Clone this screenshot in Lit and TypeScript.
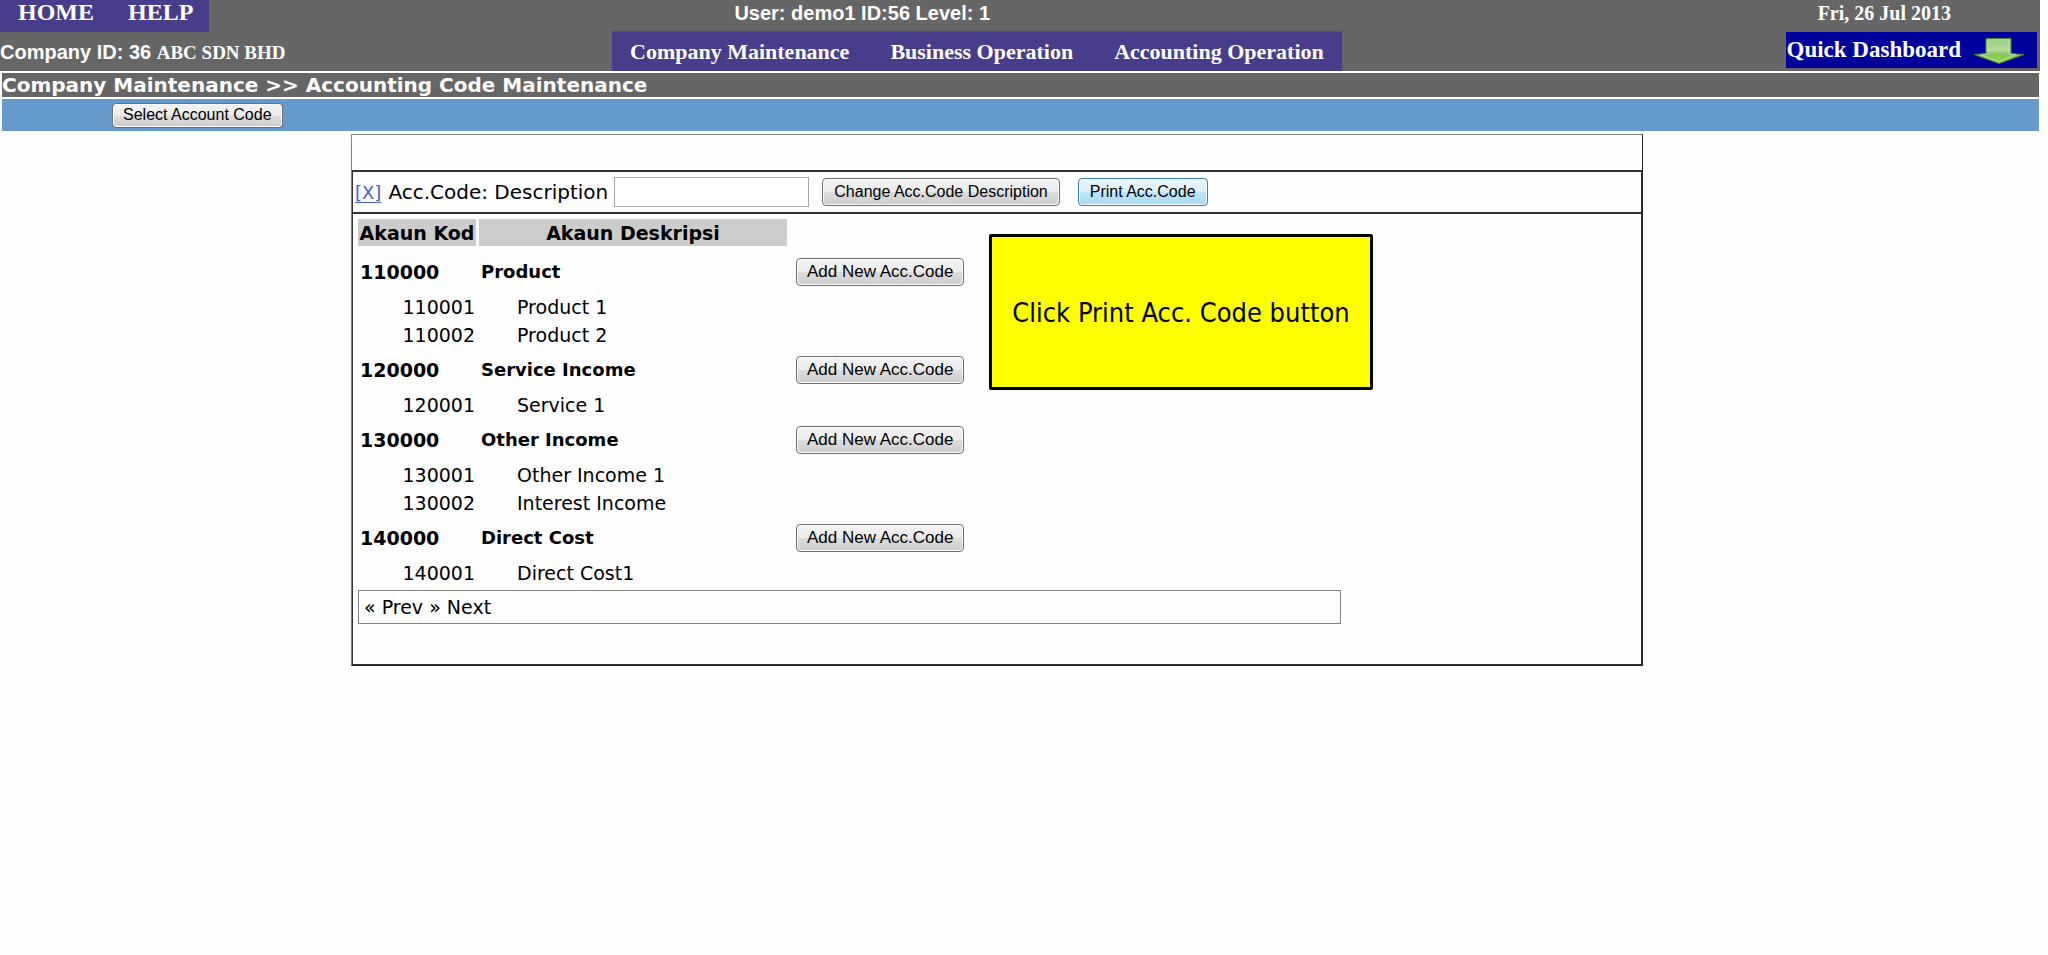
import { LitElement, html, css } from "lit";
import { customElement } from "lit/decorators.js";

interface Account {
  code: string;
  name: string;
}

interface AccountGroup extends Account {
  children: Account[];
}

const GROUPS: AccountGroup[] = [
  {
    code: "110000",
    name: "Product",
    children: [
      { code: "110001", name: "Product 1" },
      { code: "110002", name: "Product 2" },
    ],
  },
  {
    code: "120000",
    name: "Service Income",
    children: [{ code: "120001", name: "Service 1" }],
  },
  {
    code: "130000",
    name: "Other Income",
    children: [
      { code: "130001", name: "Other Income 1" },
      { code: "130002", name: "Interest Income" },
    ],
  },
  {
    code: "140000",
    name: "Direct Cost",
    children: [{ code: "140001", name: "Direct Cost1" }],
  },
];

const controls = css`
  button {
    box-sizing: border-box;
    height: 28px;
    padding: 0 9px;
    border: 1px solid #707070;
    border-radius: 4px;
    background: linear-gradient(#f3f3f3, #ebebeb 48%, #dcdcdc 52%, #cdcdcd);
    box-shadow: inset 0 0 0 1px #fafafa;
    color: #000;
    font: 16px "Liberation Sans", Arial, sans-serif;
    white-space: nowrap;
  }
`;

@customElement("site-header")
export class SiteHeader extends LitElement {
  static styles = css`
    :host {
      display: block;
      background: #666;
      color: #fff;
      font: bold 20px "Liberation Sans", Arial, sans-serif;
    }
    a {
      color: inherit;
      text-decoration: none;
    }
    .row {
      display: grid;
      align-items: start;
    }
    .top {
      grid-template-columns: 36% 1fr auto;
      height: 32px;
    }
    .bottom {
      grid-template-columns: 30% 1fr auto;
      height: 39px;
    }
    .main,
    .sections {
      display: flex;
      justify-self: start;
      background: #483d8b;
      font-family: "Liberation Serif", "Times New Roman", serif;
    }
    .main {
      height: 32px;
      font-size: 24px;
      line-height: 24px;
    }
    .main a {
      padding: 0 16px 0 18px;
    }
    .user,
    .date {
      line-height: 26px;
    }
    .date {
      padding-right: 89px;
      font-family: "Liberation Serif", "Times New Roman", serif;
    }
    .company {
      line-height: 40px;
      white-space: nowrap;
    }
    .company b {
      font: bold 19px "Liberation Serif", "Times New Roman", serif;
    }
    .sections {
      height: 39px;
      font-size: 22px;
      line-height: 40px;
      gap: 41px;
      padding: 0 18px;
      box-shadow: 0 -1px 1px #544e7c;
    }
    .dashboard {
      display: flex;
      align-items: center;
      gap: 12px;
      height: 36px;
      padding: 0 12px 0 1px;
      margin-right: 3px;
      background: #00009b;
      font: bold 23px "Liberation Serif", "Times New Roman", serif;
    }
    .dashboard svg {
      display: block;
    }
  `;

  render() {
    return html`
      <div class="row top">
        <nav class="main"><a href="#home">HOME</a><a href="#help">HELP</a></nav>
        <div class="user">User: demo1 ID:56 Level: 1</div>
        <div class="date">Fri, 26 Jul 2013</div>
      </div>
      <div class="row bottom">
        <div class="company">Company ID: 36 <b>ABC SDN BHD</b></div>
        <nav class="sections">
          <a href="#company">Company Maintenance</a>
          <a href="#business">Business Operation</a>
          <a href="#accounting">Accounting Operation</a>
        </nav>
        <a class="dashboard" href="#dashboard">
          Quick Dashboard
          <svg width="52" height="28" viewBox="0 0 52 28" aria-hidden="true">
            <defs>
              <linearGradient id="arrow" x1="0" y1="0" x2="0" y2="1">
                <stop offset="0" stop-color="#9cc982" />
                <stop offset="0.45" stop-color="#b6dc9c" />
                <stop offset="0.6" stop-color="#8cc860" />
                <stop offset="1" stop-color="#8ed044" />
              </linearGradient>
            </defs>
            <path
              d="M13 2.5H38V17.5L51 18.5L26 27.5L1 18.5L13 17.5Z"
              fill="url(#arrow)"
              stroke="#3f8a3a"
              stroke-width="1"
              stroke-linejoin="round"
            />
            <path d="M15 4H36V18.5H43L26 25.5L8 19L15 18.5Z" fill="none" stroke="#d3edbd" stroke-opacity="0.5" />
          </svg>
        </a>
      </div>
    `;
  }
}

@customElement("account-table")
export class AccountTable extends LitElement {
  static styles = [
    controls,
    css`
      :host {
        display: block;
      }
      table {
        border-spacing: 3px 0;
        line-height: 24px;
      }
      th,
      td {
        padding: 0;
        text-align: left;
        white-space: nowrap;
      }
      thead th {
        height: 27px;
        background: #ccc;
        text-align: center;
      }
      .kod {
        width: 118px;
      }
      .deskripsi {
        width: 308px;
      }
      .gap td {
        height: 5px;
        line-height: 0;
      }
      .group > * {
        height: 42px;
      }
      .group th {
        padding-left: 2px;
      }
      .group .name {
        padding-left: 2px;
        font-size: 18px;
        font-weight: bold;
      }
      .group .action {
        padding-left: 6px;
      }
      .child td {
        height: 28px;
      }
      .child .code {
        padding-right: 1px;
        text-align: right;
      }
      .child .name {
        padding-left: 38px;
      }
      button {
        padding: 0 10px;
        font-size: 17px;
      }
    `,
  ];

  render() {
    return html`
      <table>
        <thead>
          <tr>
            <th class="kod" scope="col">Akaun Kod</th>
            <th class="deskripsi" scope="col">Akaun Deskripsi</th>
          </tr>
        </thead>
        <tbody>
          <tr class="gap"><td colspan="3"></td></tr>
          ${GROUPS.map(
            (group) => html`
              <tr class="group">
                <th scope="row">${group.code}</th>
                <td class="name">${group.name}</td>
                <td class="action"><button type="button">Add New Acc.Code</button></td>
              </tr>
              ${group.children.map(
                (account) => html`
                  <tr class="child">
                    <td class="code">${account.code}</td>
                    <td class="name">${account.name}</td>
                  </tr>
                `
              )}
            `
          )}
        </tbody>
      </table>
    `;
  }
}

@customElement("app-root")
export class AppRoot extends LitElement {
  static styles = [
    controls,
    css`
      :host {
        display: block;
        min-height: 100vh;
        background: #fefefe;
        color: #000;
        font: 19px "DejaVu Sans", Verdana, sans-serif;
      }
      .page {
        margin-right: 8px;
      }
      h1 {
        margin: 2px 1px 2px 2px;
        background: #666;
        color: #fff;
        font-size: 20px;
        line-height: 24px;
        white-space: nowrap;
      }
      .toolbar {
        display: flex;
        align-items: center;
        height: 32px;
        margin: 0 1px 0 2px;
        padding-left: 110px;
        background: #69c;
      }
      .toolbar button {
        height: 25px;
        padding: 0 10px;
      }
      .content {
        display: grid;
        grid-template-columns: 351fr 1292fr 397fr;
        padding-top: 3px;
      }
      .panel {
        grid-column: 2;
        position: relative;
        box-sizing: border-box;
        border: 1px solid #808080;
        border-right-color: #222;
        border-bottom-color: #222;
      }
      .blank {
        height: 35px;
      }
      .search,
      .body {
        border: solid #333;
        border-width: 2px 1px 1px;
      }
      .search {
        display: flex;
        align-items: center;
        height: 40px;
        padding-left: 2px;
        border-bottom: 0;
        font-size: 20px;
      }
      .search a {
        margin-right: 7px;
        color: #4a63c8;
        font-size: 18px;
        text-underline-offset: 3px;
      }
      .search input {
        box-sizing: border-box;
        width: 195px;
        height: 30px;
        margin: 0 13px 0 6px;
        padding: 0 4px;
        border: 1px solid #aaa;
        background: #fff;
        font: inherit;
      }
      .search button {
        margin-right: 18px;
        padding: 0 11px;
      }
      .search .active {
        border-color: #3c7fb1;
        background: linear-gradient(#eaf6fd, #d9f0fc 48%, #bee6fd 52%, #a7d9f5);
      }
      .body {
        padding: 5px 2px 40px;
      }
      .pager {
        box-sizing: border-box;
        width: 983px;
        max-width: 100%;
        margin: 3px 0 0 3px;
        padding: 0 5px;
        border: 1px solid #808080;
        line-height: 32px;
      }
      .pager a {
        color: inherit;
        text-decoration: none;
      }
      .callout {
        position: absolute;
        top: 99px;
        left: 637px;
        box-sizing: border-box;
        width: 384px;
        height: 156px;
        display: flex;
        align-items: center;
        justify-content: center;
        border: 3px solid #000;
        border-radius: 2px;
        background: #ff0;
        font: 27px "DejaVu Sans Condensed", Tahoma, sans-serif;
        white-space: nowrap;
      }
    `,
  ];

  render() {
    return html`
      <div class="page">
        <site-header></site-header>
        <h1>Company Maintenance &gt;&gt; Accounting Code Maintenance</h1>
        <div class="toolbar"><button type="button">Select Account Code</button></div>
        <main class="content">
          <div class="panel">
            <div class="blank"></div>
            <form class="search">
              <a href="#close">[X]</a>
              <label for="description">Acc.Code: Description</label>
              <input id="description" type="text" />
              <button type="button">Change Acc.Code Description</button>
              <button class="active" type="button">Print Acc.Code</button>
            </form>
            <div class="body">
              <account-table></account-table>
              <div class="pager"><a href="#prev">« Prev</a> <a href="#next">» Next</a></div>
            </div>
            <div class="callout" role="note">Click Print Acc. Code button</div>
          </div>
        </main>
      </div>
    `;
  }
}
